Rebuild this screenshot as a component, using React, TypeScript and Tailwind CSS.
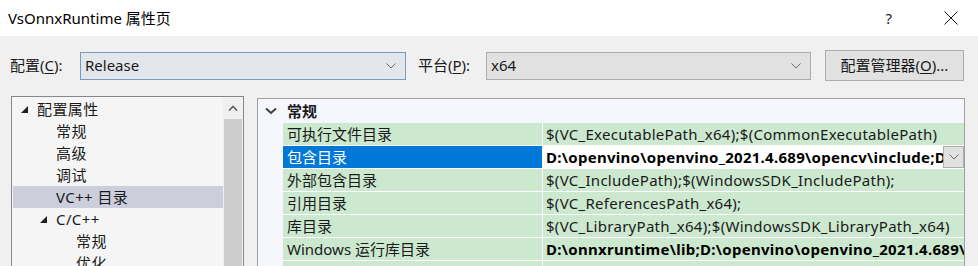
import React from "react";

const FONT = "font-['Noto_Sans','Noto_Sans_CJK_SC',sans-serif]";

function Chevron({ className = "" }: { className?: string }) {
  return (
    <svg width="10" height="6" viewBox="0 0 10 6" className={className}>
      <polyline points="0.5,0.5 5,5 9.5,0.5" fill="none" stroke="#6d6d6d" strokeWidth="1" />
    </svg>
  );
}

function Tri() {
  return (
    <svg width="7" height="7" viewBox="0 0 7 7" className="shrink-0">
      <polygon points="7,0 7,7 0,7" fill="#1f1f1f" />
    </svg>
  );
}

function Combo({ value, blue }: { value: string; blue?: boolean }) {
  return (
    <div
      className={`flex h-[28px] items-center justify-between border pl-[4px] pr-[9px] ${
        blue ? "border-[#7a9bc1] bg-[#e3e6ea]" : "border-[#adadad] bg-[#e1e1e1]"
      }`}
    >
      <span>{value}</span>
      <Chevron />
    </div>
  );
}

const tree = [
  { label: "配置属性", indent: 8, tri: true },
  { label: "常规", indent: 43 },
  { label: "高级", indent: 43 },
  { label: "调试", indent: 43 },
  { label: "VC++ 目录", indent: 43, selected: true },
  { label: "C/C++", indent: 27, tri: true },
  { label: "常规", indent: 63 },
  { label: "优化", indent: 63 },
];

const rows = [
  { name: "可执行文件目录", value: "$(VC_ExecutablePath_x64);$(CommonExecutablePath)" },
  { name: "包含目录", value: "D:\\openvino\\openvino_2021.4.689\\opencv\\include;D:\\openvino\\openvino_2021.4.689", bold: true, selected: true },
  { name: "外部包含目录", value: "$(VC_IncludePath);$(WindowsSDK_IncludePath);" },
  { name: "引用目录", value: "$(VC_ReferencesPath_x64);" },
  { name: "库目录", value: "$(VC_LibraryPath_x64);$(WindowsSDK_LibraryPath_x64)" },
  { name: "Windows 运行库目录", value: "D:\\onnxruntime\\lib;D:\\openvino\\openvino_2021.4.689\\opencv\\lib", bold: true },
  { name: "", value: "" },
];

export default function App() {
  return (
    <div className={`h-[266px] w-[978px] overflow-hidden bg-[#f0f0f0] text-[15px] text-[#1a1a1a] ${FONT}`}>
      <div className="flex h-[36px] items-center justify-between bg-white pl-[8px] pr-[20px]">
        <span className="text-[15px] text-black">VsOnnxRuntime 属性页</span>
        <div className="flex items-center gap-[52px] text-[#1a1a1a]">
          <span className="text-[15px]">?</span>
          <svg width="14" height="14" viewBox="0 0 14 14">
            <path d="M0.5 0.5 L13.5 13.5 M13.5 0.5 L0.5 13.5" stroke="#1a1a1a" strokeWidth="1" />
          </svg>
        </div>
      </div>

      <div className="mt-[14px] flex h-[31px] items-center pl-[10px]">
        <span className="w-[70px]">
          配置(<span className="underline underline-offset-2">C</span>):
        </span>
        <div className="w-[326px]">
          <Combo value="Release" blue />
        </div>
        <span className="ml-[12px] w-[68px]">
          平台(<span className="underline underline-offset-2">P</span>):
        </span>
        <div className="w-[325px]">
          <Combo value="x64" />
        </div>
        <button className="ml-[14px] flex h-[31px] w-[139px] items-center justify-center border border-[#adadad] bg-[#e1e1e1]">
          配置管理器(<span className="underline underline-offset-2">O</span>)...
        </button>
      </div>

      <div className="mt-[15px] flex items-start pl-[11px]">
        <div className="flex h-[180px] w-[233px] border border-[#828790] bg-[#f5f5f5]">
          <div className="flex-1 pl-[1px] pt-[1px]">
            {tree.map((t, i) => (
              <div
                key={i}
                className={`flex h-[22px] items-center gap-[9px] ${t.selected ? "bg-[#cccedb]" : ""}`}
                style={{ paddingLeft: t.indent }}
              >
                {t.tri && <Tri />}
                <span className="leading-none tracking-[0.4px]">{t.label}</span>
              </div>
            ))}
          </div>
          <div className="flex w-[20px] flex-col bg-[#f0f0f0]">
            <div className="flex h-[22px] items-center justify-center">
              <svg width="10" height="6" viewBox="0 0 10 6">
                <polyline points="1,5.5 5,1.5 9,5.5" fill="none" stroke="#606060" strokeWidth="1.6" />
              </svg>
            </div>
            <div className="mx-[1px] flex-1 bg-[#cdcdcd]" />
          </div>
        </div>

        <div className="ml-[13px] mt-[2px] h-[180px] w-[708px] border border-[#a0a0a0] bg-[#f5f7fc]">
          <div className="flex h-[24px] items-center">
            <div className="flex w-[25px] justify-center">
              <svg width="12" height="8" viewBox="0 0 12 8">
                <polyline points="1,1.5 6,6 11,1.5" fill="none" stroke="#404040" strokeWidth="2" />
              </svg>
            </div>
            <span className="ml-[4px] font-bold">常规</span>
          </div>
          {rows.map((r, i) => (
            <div key={i} className="ml-[25px] flex h-[23px] border-b border-white">
              <div
                className={`flex w-[259px] items-center pl-[4px] ${
                  r.selected ? "bg-[#0078d7] text-white" : "bg-[#cce8cf]"
                }`}
              >
                {r.name}
              </div>
              <div
                className={`ml-[1px] flex min-w-0 flex-1 items-center ${
                  r.selected ? "bg-white" : "bg-[#cce8cf]"
                }`}
              >
                <span
                  className={`min-w-0 flex-1 overflow-hidden whitespace-nowrap pl-[3px] tracking-[0.28px] ${
                    r.bold ? "font-bold text-black" : ""
                  }`}
                >
                  {r.value}
                </span>
                {r.selected && (
                  <div className="flex h-full w-[21px] shrink-0 items-center justify-center border border-[#adadad] bg-[#e1e1e1]">
                    <Chevron />
                  </div>
                )}
              </div>
            </div>
          ))}
        </div>
      </div>
    </div>
  );
}
